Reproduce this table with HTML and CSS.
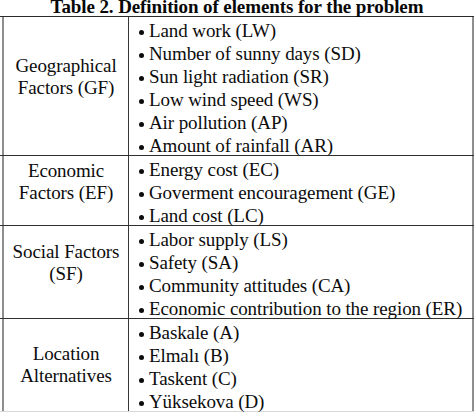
FILE: index.html
```html
<!DOCTYPE html>
<html>
<head>
<meta charset="utf-8">
<link rel="stylesheet" href="styles.css">
</head>
<body>
<div class="title">Table 2. Definition of elements for the problem</div>
<div class="table">
  <div class="row">
    <div class="cat">Geographical<br>Factors (GF)</div>
    <ul class="items">
      <li class="item">Land work (LW)</li>
      <li class="item">Number of sunny days (SD)</li>
      <li class="item">Sun light radiation (SR)</li>
      <li class="item">Low wind speed (WS)</li>
      <li class="item">Air pollution (AP)</li>
      <li class="item">Amount of rainfall (AR)</li>
    </ul>
  </div>
  <div class="row">
    <div class="cat">Economic<br>Factors (EF)</div>
    <ul class="items">
      <li class="item">Energy cost (EC)</li>
      <li class="item">Goverment encouragement (GE)</li>
      <li class="item">Land cost (LC)</li>
    </ul>
  </div>
  <div class="row">
    <div class="cat">Social Factors<br>(SF)</div>
    <ul class="items">
      <li class="item">Labor supply (LS)</li>
      <li class="item">Safety (SA)</li>
      <li class="item">Community attitudes (CA)</li>
      <li class="item">Economic contribution to the region (ER)</li>
    </ul>
  </div>
  <div class="row last">
    <div class="cat centered">Location<br>Alternatives</div>
    <ul class="items">
      <li class="item">Baskale (A)</li>
      <li class="item">Elmalı (B)</li>
      <li class="item">Taskent (C)</li>
      <li class="item">Yüksekova (D)</li>
    </ul>
  </div>
</div>
</body>
</html>
```
FILE: styles.css
```css
html, body {
  margin: 0;
  padding: 0;
  background: #fff;
}
body {
  width: 474px;
  height: 412px;
  overflow: hidden;
  font-family: "Liberation Serif", "Times New Roman", serif;
  color: #0c0c0c;
}
.title {
  height: 16px;
  line-height: 13px;
  font-size: 19px;
  font-weight: bold;
  letter-spacing: -0.1px;
  text-align: center;
  color: #080808;
}
.table {
  border-top: 1px solid #2a2a2a;
}
.row {
  display: grid;
  grid-template-columns: 127px 345px;
  padding-left: 2px;
  border-bottom: 1px solid #303030;
}
.row.last {
  border-bottom: 1px solid #d8d8d8;
}
.cat {
  border-left: 2px solid #8e8e8e;
  border-right: 1px solid #363636;
  display: flex;
  flex-direction: column;
  justify-content: center;
  text-align: center;
  font-size: 19px;
  letter-spacing: -0.1px;
  line-height: 22px;
  padding-bottom: 18px;
}
.cat.centered {
  padding-bottom: 0;
}
.items {
  list-style: none;
  margin: 0;
  border-right: 2px solid #8e8e8e;
  padding: 0 0 0 10px;
  font-size: 19px;
  letter-spacing: -0.1px;
}
.item {
  height: 23px;
  box-sizing: border-box;
  padding-top: 4px;
  line-height: 19px;
  white-space: nowrap;
}
.item::before {
  content: "";
  display: inline-block;
  width: 5px;
  height: 5px;
  border-radius: 50%;
  background: #0c0c0c;
  margin: 0 5px 2.5px 0;
}
```
